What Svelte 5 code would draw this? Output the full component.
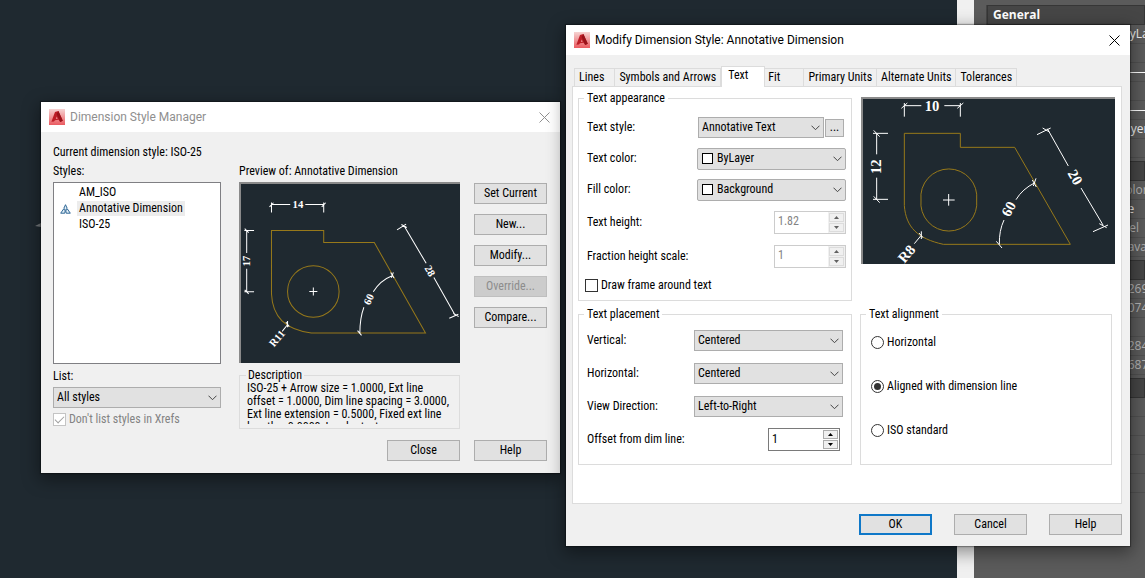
<script>
  const styles = ['AM_ISO', 'Annotative Dimension', 'ISO-25'];
  const actions = ['Set Current', 'New...', 'Modify...', 'Override...', 'Compare...'];
  const tabs = ['Lines', 'Symbols and Arrows', 'Text', 'Fit', 'Primary Units', 'Alternate Units', 'Tolerances'];
  const alignments = ['Horizontal', 'Aligned with dimension line', 'ISO standard'];
  const palette = [
    { title: 'General', rows: [{ v: 'ByLayer', swatch: true }, {}, { line: true }, {}, { line: true }, { v: 'ByLayer', on: true }, {}] },
    { title: '', rows: [{ v: 'ByColor' }, { v: 'None', on: true }, { v: 'Model' }, { v: 'Not available' }] },
    { title: '', rows: [{ v: '132.269' }, { v: '110.074' }, {}, { v: '172.284' }, { v: '196.687' }] },
    { title: '', rows: [{}, {}, {}, {}, {}] }
  ];
  let selected = $state('Annotative Dimension');
  let tab = $state('Text');
  let alignment = $state('Aligned with dimension line');
</script>

{#snippet logo()}
  <svg class="logo" viewBox="0 0 16 16" aria-hidden="true">
    <defs>
      <linearGradient id="tile" x1="0" y1="0" x2="0" y2="1">
        <stop offset="0" stop-color="#f6d3d2" />
        <stop offset="1" stop-color="#ea5a60" />
      </linearGradient>
    </defs>
    <rect width="16" height="16" fill="url(#tile)" />
    <path d="M2.4 12.8 6 3 9.4 2 13.8 11.8 11.2 13 9.6 10.8 6 11.2 5 12.4Z" fill="#bd1d26" />
    <path d="M9.4 2 13.8 11.8 11.2 13 7.6 5Z" fill="#98121a" />
    <path d="M7.7 7.6 8.7 9.8 6.9 9.9Z" fill="#ef8f90" />
  </svg>
{/snippet}

{#snippet cross()}
  <svg viewBox="0 0 11 11" width="11" height="11" aria-hidden="true">
    <path d="M.5.5 10.5 10.5M10.5.5.5 10.5" stroke="currentColor" fill="none" />
  </svg>
{/snippet}

{#snippet drop(id, value, swatch)}
  <span class="drop" class:swatched={swatch}>
    <select {id}><option>{value}</option></select>
    {#if swatch}<i class="swatch"></i>{/if}
    <svg class="chevron" viewBox="0 0 9 6" aria-hidden="true"><path d="M.5.7 4.5 4.7 8.5.7" fill="none" stroke="#444" /></svg>
  </span>
{/snippet}

{#snippet spin(id, value, disabled)}
  <span class="spin" class:disabled>
    <input type="text" {id} {value} {disabled} />
    <span class="steps">
      <button aria-label="Increase" {disabled}><svg viewBox="0 0 5 3"><path d="M0 3 2.5 0 5 3Z" /></svg></button>
      <button aria-label="Decrease" {disabled}><svg viewBox="0 0 5 3"><path d="M0 0 2.5 3 5 0Z" /></svg></button>
    </span>
  </span>
{/snippet}

<div class="desktop">
  <main class="canvas">
    <svg class="mark" viewBox="0 0 6 4" aria-hidden="true"><path d="M0 3 6 0V4Z" fill="#74797c" /></svg>
  </main>
  <div class="strip"></div>
  <aside class="palette">
    {#each palette as group}
      <section>
        <h2>{group.title}</h2>
        {#each group.rows as row}
          <div class="prop" class:on={row.on || row.swatch}>
            {#if row.swatch}<i></i>{/if}
            {#if row.line}<hr />{/if}
            {row.v ?? ''}
          </div>
        {/each}
      </section>
    {/each}
  </aside>

  <section class="window manager" aria-label="Dimension Style Manager">
    <header>{@render logo()}<h1>Dimension Style Manager</h1><button class="x" aria-label="Close window">{@render cross()}</button></header>
    <div class="manager-body">
      <p class="current">Current dimension style: ISO-25</p>
      <div class="cols">
        <div class="col">
          <p class="cap">Styles:</p>
          <ul class="list">
            {#each styles as s}
              <li>
                <span class="mark-slot">
                  {#if s === 'Annotative Dimension'}
                    <svg viewBox="0 0 11 10" width="11" height="10" aria-hidden="true">
                      <path d="M5.5.7 7.2 4.4 5.5 5.9 3.8 4.4ZM3.6 5 5.2 6.8 4.8 9.2.7 9.2ZM7.4 5 10.3 9.2 6.2 9.2 5.8 6.8Z" fill="#e4f0f8" stroke="#2f6796" />
                    </svg>
                  {/if}
                </span>
                <button class:sel={selected === s} onclick={() => (selected = s)}>{s}</button>
              </li>
            {/each}
          </ul>
          <label class="cap list-cap" for="list-filter">List:</label>
          {@render drop('list-filter', 'All styles', false)}
          <label class="check muted"><input type="checkbox" checked disabled /><span>Don't list styles in Xrefs</span></label>
        </div>
        <div class="col">
          <p class="cap">Preview of: Annotative Dimension</p>
          <div class="preview">
            <svg viewBox="18 12 654 534" role="img" aria-label="Style preview">
              <path class="part" d="M109 151H265V187H416L569 457H228C150 446 112 410 109 340ZM311 333A77 77 0 1 1 157 333A77 77 0 1 1 311 333Z" />
              <path class="dim" d="M109 67V97M265 67V97M103 80 115 68M259 80 271 68M109 73H165M210 73H265M28 151H57M28 334H57M35 151V218M35 265V334M29 145 41 157M29 328 41 340M222 333H246M234 321V345M484 149 511 132M497 133 513 142M504 135 571 249M594 291 658 405M640 413 667 401M652 398 668 408M471 285Q433 300 413 334M385 380Q373 412 373 457M465 276 475 293M473 276 467 292M366 450 378 464M157 421V440M152 424 162 438M158 431 141 452" />
              <g class="num">
                <text x="188" y="84">14</text>
                <text transform="translate(44 242) rotate(-90)">17</text>
                <text transform="translate(573 277) rotate(60)">28</text>
                <text transform="translate(409 361) rotate(-65)">60</text>
                <text transform="translate(134 480) rotate(-50)">R11</text>
              </g>
            </svg>
          </div>
          <fieldset class="desc">
            <legend>Description</legend>
            <p>ISO-25 + Arrow size = 1.0000, Ext line offset = 1.0000, Dim line spacing = 3.0000, Ext line extension = 0.5000, Fixed ext line length = 0.0000, Leader text</p>
          </fieldset>
        </div>
        <div class="actions">
          {#each actions as a}
            <button class="btn" disabled={a === 'Override...'}>{a}</button>
          {/each}
        </div>
      </div>
      <footer><button class="btn">Close</button><button class="btn">Help</button></footer>
    </div>
  </section>

  <section class="window modify" aria-label="Modify Dimension Style">
    <header>{@render logo()}<h1>Modify Dimension Style: Annotative Dimension</h1><button class="x" aria-label="Close window">{@render cross()}</button></header>
    <div class="modify-body">
      <div class="tabs" role="tablist">
        {#each tabs as t}
          <button role="tab" class:fit={t === 'Fit'} class:lines={t === 'Lines'} aria-selected={tab === t} onclick={() => (tab = t)}>{t}</button>
        {/each}
      </div>
      <div class="page">
        <fieldset class="appearance">
          <legend>Text appearance</legend>
          <div class="row"><label for="style">Text style:</label><span class="pair">{@render drop('style', 'Annotative Text', false)}<button class="btn more" aria-label="Text styles">...</button></span></div>
          <div class="row"><label for="color">Text color:</label>{@render drop('color', 'ByLayer', true)}</div>
          <div class="row"><label for="fill">Fill color:</label>{@render drop('fill', 'Background', true)}</div>
          <div class="row tall"><label for="height">Text height:</label>{@render spin('height', '1.82', true)}</div>
          <div class="row tall"><label for="fraction">Fraction height scale:</label>{@render spin('fraction', '1', true)}</div>
          <label class="check frame"><input type="checkbox" /><span>Draw frame around text</span></label>
        </fieldset>
        <div class="preview">
          <svg viewBox="24 30 756 495" role="img" aria-label="Style preview">
            <path class="part" d="M148 133H316V175H479L646 466H265C188 449 153 415 148 350ZM365 333A84 84 0 1 1 198 333A84 84 0 1 1 365 333Z" />
            <path class="dim" d="M148 42V83M316 42V83M139 58 157 42M307 58 325 42M148 50H199M268 50H316M54 133H99M54 331H99M65 133V196M65 266V331M56 124 74 143M56 322 74 341M264 333H299M281 315V350M546 137 587 117M563 117 583 129M577 119 640 231M678 297 744 408M714 428 759 408M733 404 755 416M540 281Q502 300 483 332M447 393Q432 425 433 466M532 273 544 294M543 268 535 291M424 457 441 477M199 427V450M192 432 204 446M197 441 178 464" />
            <g class="num big">
              <text x="231" y="65">10</text>
              <text transform="translate(79 233) rotate(-90)">12</text>
              <text transform="translate(648 272) rotate(60)">20</text>
              <text transform="translate(474 367) rotate(-62)">60</text>
              <text transform="translate(166 504) rotate(-50)">R8</text>
            </g>
          </svg>
        </div>
        <fieldset class="placement">
          <legend>Text placement</legend>
          <div class="row"><label for="vertical">Vertical:</label>{@render drop('vertical', 'Centered', false)}</div>
          <div class="row"><label for="horizontal">Horizontal:</label>{@render drop('horizontal', 'Centered', false)}</div>
          <div class="row"><label for="direction">View Direction:</label>{@render drop('direction', 'Left-to-Right', false)}</div>
          <div class="row"><label for="offset">Offset from dim line:</label>{@render spin('offset', '1', false)}</div>
        </fieldset>
        <fieldset class="alignment">
          <legend>Text alignment</legend>
          <div class="radios">
            {#each alignments as a}
              <label class="check"><input type="radio" name="alignment" value={a} bind:group={alignment} /><span>{a}</span></label>
            {/each}
          </div>
        </fieldset>
      </div>
      <footer><button class="btn primary">OK</button><button class="btn">Cancel</button><button class="btn">Help</button></footer>
    </div>
  </section>
</div>

<style>
  :global(body) { margin: 0; }
  .desktop, .desktop * { box-sizing: border-box; }
  .desktop {
    position: relative; display: flex; min-height: 100vh; overflow: hidden;
    background: #1f2930; color: #000; font: 12px/13px 'Roboto Condensed', 'Liberation Sans', Arial, sans-serif;
  }
  p, h1, h2, ul { margin: 0; padding: 0; }
  button, input, select { font: inherit; color: inherit; margin: 0; }
  svg { display: block; }

  .canvas { flex: 1; position: relative; }
  .mark { position: absolute; left: 35px; top: 223px; width: 6px; height: 4px; }
  .strip { width: 17px; background: #f0f0f0; }
  .palette { width: 171px; padding: 5px 0 0 12px; overflow: hidden; background: #5b5b5b; font: 12px/18px 'Open Sans', sans-serif; }
  .palette section { margin-bottom: 3px; border-left: 1px solid #444; }
  .palette h2 { height: 20px; padding-left: 5px; background: #464646; border: 1px solid #363636; color: #fff; font-size: 12px; line-height: 18px; font-weight: 700; }
  .prop { display: flex; align-items: center; height: 19px; padding-left: 117px; border-bottom: 1px solid #505050; color: #b4b4b4; white-space: nowrap; }
  .prop.on { color: #f0f0f0; }
  .prop i { flex: none; width: 12px; height: 12px; margin-right: 6px; background: #fff; }
  .prop hr { width: 60px; flex: none; margin: 0; border: 0; border-top: 1px solid #fff; }

  .window { position: absolute; background: #f0f0f0; box-shadow: 0 0 1px 1px rgba(0, 0, 0, .3), 0 5px 16px 2px rgba(0, 0, 0, .4); }
  .manager { left: 41px; top: 102px; width: 519px; }
  .modify { left: 566px; top: 25px; width: 564px; }
  header { display: flex; align-items: center; gap: 5px; height: 30px; padding: 0 10px 0 8px; background: #fff; }
  .logo { width: 16px; height: 16px; }
  h1 { flex: 1; font: 12px/16px Roboto, sans-serif; }
  .manager h1, .manager .x { color: #8f8f8f; }
  .x { display: flex; padding: 0; border: 0; background: none; }

  .btn { width: 73px; height: 21px; padding: 0; border: 1px solid #adadad; background: #e1e1e1; }
  .btn:disabled { color: #8d8d8d; background: #ccc; border-color: #bfbfbf; }
  .btn.primary { border: 2px solid #0f78c8; }
  footer { display: flex; justify-content: flex-end; }

  .manager-body { padding: 14px 13px 12px 12px; }
  .current { margin-bottom: 6px; }
  .cols { display: grid; grid-template-columns: 168fr 225fr 73px; column-gap: 14px; }
  .col + .col { padding-left: 4px; }
  .cap { display: block; height: 17px; white-space: nowrap; }
  .list { height: 182px; padding: 2px 0; border: 1px solid #7f7f83; background: #fff; list-style: none; }
  .list li { display: flex; height: 16px; }
  .mark-slot { display: flex; justify-content: center; align-items: center; width: 23px; }
  .list button { height: 15px; padding: 0 2px; border: 0; background: none; line-height: 15px; }
  .list button.sel { background: #ececec; }
  .list-cap { margin-top: 6px; }
  .col > .check { margin-top: 5px; }
  .actions { display: flex; flex-direction: column; gap: 10px; padding-top: 18px; }
  .manager footer { gap: 14px; margin-top: 11px; }

  .preview { border: solid #8a8a8a; border-width: 2px 0 0 2px; background: #1f2930; }
  .preview svg { width: 100%; height: auto; }
  .part { fill: none; stroke: #97791a; stroke-width: 3; }
  .dim { fill: none; stroke: #fff; stroke-width: 3; }
  .num { fill: #fff; font: 700 32px 'Liberation Serif', serif; text-anchor: middle; }
  .num.big { font-size: 44px; }

  fieldset { min-width: 0; margin: 0; border: 1px solid #dcdcdc; }
  legend { padding: 0 3px; line-height: 13px; }
  .desc { margin-top: 6px; padding: 0 7px 4px; }
  .desc legend { padding: 0 2px; margin-left: -1px; }
  .desc p { height: 42px; overflow: hidden; }

  .check { display: flex; align-items: center; gap: 3px; }
  .check input { appearance: none; flex: none; display: grid; place-items: center; width: 13px; height: 13px; border: 1px solid #333; background: #fff; }
  .check input[type='radio'] { border-radius: 50%; }
  .check input[type='radio']:checked::before { content: ''; width: 7px; height: 7px; border-radius: 50%; background: #333; }
  .check input[type='checkbox']:checked::before { content: ''; width: 8px; height: 4px; margin-bottom: 3px; border: solid currentColor; border-width: 0 0 1px 1px; transform: rotate(-45deg); }
  .check.muted { color: #838383; }
  .check.muted input { border-color: #c4c4c4; color: #a0a0a0; }

  .drop { display: grid; align-items: center; }
  .drop > * { grid-area: 1 / 1; }
  .drop select { appearance: none; width: 100%; height: 21px; padding: 0 18px 0 3px; border: 1px solid #adadad; border-radius: 0; background: #e1e1e1; }
  .drop.swatched select { height: 22px; padding-left: 19px; border-radius: 2px; }
  .chevron { justify-self: end; width: 9px; height: 6px; margin-right: 4px; pointer-events: none; }
  .swatch { width: 11px; height: 11px; margin-left: 5px; border: 1px solid #000; background: #fff; pointer-events: none; }

  .spin { display: flex; justify-self: end; width: 72px; height: 23px; border: 1px solid #7a7a7a; background: #fff; }
  .spin input { flex: 1; min-width: 0; height: 19px; padding: 0 3px; border: 0; background: none; }
  .steps { display: flex; flex-direction: column; gap: 1px; padding: 1px; }
  .steps button { flex: 1; display: grid; place-items: center; width: 15px; padding: 0; border: 1px solid #acacac; background: #f0f0f0; }
  .steps svg { width: 5px; height: 3px; fill: #000; }
  .spin.disabled { border-color: #ccc; color: #838383; }
  .spin.disabled .steps { background: #f0f0f0; }
  .spin.disabled button { border-color: #dcdcdc; }
  .spin.disabled .steps svg { fill: #606060; }

  .modify-body { padding: 11px 8px 11px 6px; }
  .tabs { display: flex; align-items: flex-end; height: 20px; padding-left: 2px; }
  .tabs button { height: 18px; padding: 0 4px; border: 1px solid #dcdcdc; border-width: 1px 1px 0 0; background: #f0f0f0; white-space: nowrap; }
  .tabs button.lines { padding-right: 10px; border-left-width: 1px; }
  .tabs button.fit { padding: 0 23px 0 3px; }
  .tabs button[aria-selected='true'] { height: 21px; margin-bottom: -1px; padding: 0 16px 4px 6px; border-left-width: 1px; background: #fff; z-index: 1; }
  .page { display: grid; grid-template-columns: 274px 1fr; column-gap: 8px; align-items: start; padding: 5px 6px 38px 5px; border: 1px solid #dcdcdc; background: #fff; }
  .page fieldset { padding: 0 5px 0 8px; }
  .page legend { margin-left: -3px; }
  .row { display: grid; grid-template-columns: 110px 1fr; align-items: center; height: 31px; white-space: nowrap; }
  .row.tall { height: 34px; }
  .appearance { min-height: 209px; }
  .appearance .row:first-of-type { margin-top: 7px; }
  .pair { display: flex; align-items: center; gap: 1px; padding-left: 1px; }
  .pair .drop { width: 126px; }
  .btn.more { width: 19px; height: 18px; }
  .frame { margin: 6px 0 0 -2px; }
  .page .preview { margin: 5px 0 0 1px; }
  .placement, .alignment { min-height: 157px; margin-top: 7px; }
  .placement .row { grid-template-columns: 107px 1fr; padding-right: 3px; height: 33px; }
  .placement .row:first-of-type { margin-top: 3px; }
  .placement .spin { margin-right: 3px; }
  .alignment { margin-right: 3px; }
  .radios { display: flex; flex-direction: column; gap: 31px; padding: 15px 0 0 2px; }
  .modify footer { gap: 22px; margin-top: 10px; }
</style>
